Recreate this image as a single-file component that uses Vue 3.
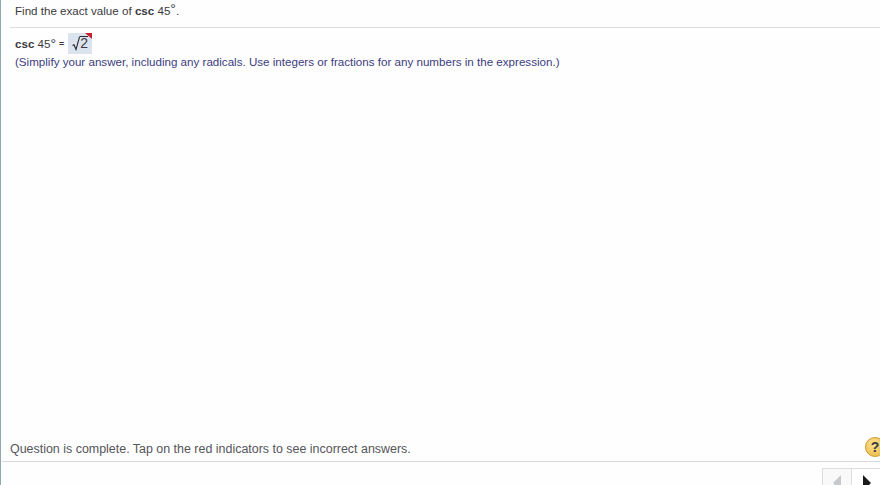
<script setup>
</script>

<template>
  <div class="player">
    <div class="question">
      <p class="prompt">Find the exact value of <b>csc</b> 45<sup>°</sup>.</p>
    </div>
    <div class="work">
      <div class="answer-line">
        <b>csc</b>&nbsp;45<sup>°</sup>
        <span class="equals">=</span>
        <span class="answer">
          <svg class="radical" width="8" height="15" viewBox="0 0 8 15">
            <path d="M0.5 9.5 L2 8.8 L4 13.5 L7.5 1 L8 1" fill="none" stroke="#2a2a30" stroke-width="1.1" />
          </svg>
          <span class="radicand">2</span>
          <svg class="flag" width="7" height="7" viewBox="0 0 7 7">
            <polygon points="0,0 7,0 7,6" fill="#c8232c" />
          </svg>
        </span>
      </div>
      <p class="hint">(Simplify your answer, including any radicals. Use integers or fractions for any numbers in the expression.)</p>
    </div>
    <div class="status">
      <span>Question is complete. Tap on the red indicators to see incorrect answers.</span>
      <span class="help">?</span>
    </div>
    <div class="footer">
      <div class="pager">
        <button class="page prev" aria-label="Previous"></button>
        <button class="page next" aria-label="Next"></button>
      </div>
    </div>
  </div>
</template>

<style scoped>
.player {
  width: 880px;
  height: 485px;
  box-sizing: border-box;
  display: flex;
  flex-direction: column;
  overflow: hidden;
  background: #fefefe;
  border-left: 1px solid #8fa9ad;
  padding-left: 1px;
  font-family: "Liberation Sans", Arial, sans-serif;
  font-size: 11.6px;
  color: #3a3a3e;
}

p {
  margin: 0;
}

b {
  font-weight: bold;
}

sup {
  font-size: 14px;
  line-height: 0;
  vertical-align: 1px;
}

.question {
  margin-left: 8px;
  height: 28px;
  box-sizing: border-box;
  padding: 4px 0 0 5px;
  border-bottom: 1px solid #d9dfe0;
}

.prompt {
  line-height: 14px;
}

.work {
  flex: 1;
  padding: 5px 0 0 13px;
}

.answer-line {
  display: flex;
  align-items: center;
  height: 21px;
  white-space: pre;
}

.equals {
  margin: 0 4px 0 3px;
  font-size: 9px;
  font-weight: bold;
}

.answer {
  position: relative;
  display: flex;
  align-items: center;
  width: 24px;
  height: 21px;
  box-sizing: border-box;
  padding-left: 4px;
  background: #dbe3ee;
  font-size: 14px;
}

.flag {
  position: absolute;
  top: 0;
  right: 0;
}

.radicand {
  margin-top: -1px;
  border-top: 1px solid #2a2a30;
  line-height: 13px;
}

.hint {
  line-height: 15px;
  color: #3c3c80;
}

.status {
  position: relative;
  height: 25px;
  box-sizing: border-box;
  padding: 5px 0 0 8px;
  border-bottom: 1px solid #d6dad9;
  font-size: 12.45px;
  line-height: 15px;
  color: #55555a;
}

.help {
  position: absolute;
  right: -5px;
  top: 0;
  width: 20px;
  height: 20px;
  border-radius: 50%;
  background: radial-gradient(circle at 40% 30%, #fbe08e, #eab73e);
  border: 1px solid #c99a2e;
  box-sizing: border-box;
  text-align: center;
  font: bold 14px/18px "Liberation Sans", Arial, sans-serif;
  color: #3a3a3e;
}

.footer {
  height: 23px;
  display: flex;
  justify-content: flex-end;
  padding-top: 6px;
  box-sizing: border-box;
}

.pager {
  display: flex;
  margin-right: -2px;
}

.page {
  width: 30px;
  height: 30px;
  padding: 0;
  background: #fff;
  border: 1px solid #dcdfe0;
  position: relative;
}

.prev {
  background: #f9f9f9;
}

.page + .page {
  border-left: 0;
}

.prev::after,
.next::after {
  content: "";
  position: absolute;
  top: 6px;
  border-top: 8px solid transparent;
  border-bottom: 8px solid transparent;
}

.prev::after {
  left: 10px;
  border-right: 8px solid #c6cacc;
}

.next::after {
  left: 11px;
  border-left: 8px solid #1a1a1a;
}
</style>
